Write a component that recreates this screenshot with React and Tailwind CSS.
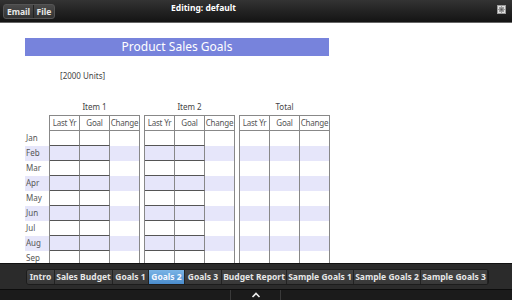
import React from 'react';

const MONTHS = ['Jan', 'Feb', 'Mar', 'Apr', 'May', 'Jun', 'Jul', 'Aug', 'Sep'];

const TABS = [
  { label: 'Intro', w: 'w-[28px]' },
  { label: 'Sales Budget', w: 'w-[58px]' },
  { label: 'Goals 1', w: 'w-[36px]' },
  { label: 'Goals 2', w: 'w-[36px]', active: true },
  { label: 'Goals 3', w: 'w-[37px]' },
  { label: 'Budget Report', w: 'w-[65px]' },
  { label: 'Sample Goals 1', w: 'w-[67px]' },
  { label: 'Sample Goals 2', w: 'w-[67px]' },
  { label: 'Sample Goals 3', w: 'w-[67px]' },
];

function GoalTable({ title, lined }) {
  return (
    <div className="flex flex-col w-[91px]">
      <div className="h-[14px] text-[8px] leading-[12px] text-center text-[#444]">{title}</div>
      <div className="border-l border-t border-[#888]">
        {/* header */}
        <div className="flex h-[15px] border-b border-[#888]">
          {['Last Yr', 'Goal', 'Change'].map((h) => (
            <div key={h} className="w-[30px] border-r border-[#888] text-[8px] leading-[14px] text-center text-[#555] tracking-[-0.2px]">
              {h}
            </div>
          ))}
        </div>
        {MONTHS.map((m, i) => {
          const shade = i % 2 === 1 ? 'bg-[#e6e6fa]' : 'bg-white';
          return (
            <div key={m} className="flex">
              {[0, 1, 2].map((c) => (
                <div
                  key={c}
                  className={`w-[30px] h-[15px] border-r border-[#888] ${shade} ${
                    lined && c < 2 ? 'border-b border-b-[#555]' : ''
                  }`}
                />
              ))}
            </div>
          );
        })}
      </div>
    </div>
  );
}

export default function App() {
  return (
    <div className="w-[512px] h-[300px] flex flex-col overflow-hidden font-['Noto_Sans',sans-serif]">
      {/* top bar */}
      <div className="h-[23px] shrink-0 flex items-center bg-gradient-to-b from-[#333] to-[#141414] border-b border-[#666] relative">
        <div className="ml-[3px] flex h-[15px] rounded-[3px] border border-[#555] bg-gradient-to-b from-[#4a4a4a] to-[#333] text-[8.5px] font-bold text-[#e8e8e8] leading-[13px]">
          <div className="w-[30px] text-center border-r border-[#222]">Email</div>
          <div className="w-[20px] text-center">File</div>
        </div>
        <div className="ml-[116px] text-[8.5px] font-bold text-white leading-none pb-[5px]">Editing: default</div>
        <svg className="absolute right-[6px] top-[5px]" width="9" height="9" viewBox="0 0 9 9">
          <rect x="0" y="0" width="9" height="9" fill="#9a9a9a" />
          <path d="M1 1h3v1H2v2H1zM8 1v3H7V2H5V1zM1 8V5h1v2h2v1zM8 8H5V7h2V5h1z" fill="#e0e0e0" />
          <rect x="3.5" y="3.5" width="2" height="2" fill="#555" />
        </svg>
      </div>

      {/* sheet */}
      <div className="flex-1 overflow-hidden bg-white pl-[25px] pt-[15px]">
        <div className="w-[304px] h-[18px] bg-[#7783dc] text-white text-[12px] flex items-center justify-center leading-none">
          Product Sales Goals
        </div>
        <div className="mt-[14px] h-[12px] pl-[35px] text-[8px] leading-[12px] text-[#444]">[2000 Units]</div>
        <div className="mt-[19px] flex">
          <div className="w-[24px] flex flex-col">
            <div className="h-[30px]" />
            {MONTHS.map((m, i) => (
              <div
                key={m}
                className={`h-[15px] text-[8px] leading-[14px] pl-[1px] text-[#555] ${i % 2 === 1 ? 'bg-[#e6e6fa]' : ''}`}
              >
                {m}
              </div>
            ))}
          </div>
          <GoalTable title="Item 1" lined />
          <div className="w-[4px]" />
          <GoalTable title="Item 2" lined />
          <div className="w-[4px]" />
          <GoalTable title="Total" />
        </div>
      </div>

      {/* sheet tabs */}
      <div className="h-[26px] shrink-0 bg-[#2b2b2b] border-t border-[#111] flex items-center pl-[26px]">
        <div className="flex h-[16px] rounded-[3px] overflow-hidden border border-[#1c1c1c]">
          {TABS.map((t) => (
            <div
              key={t.label}
              className={`${t.w} text-center text-[8.5px] font-bold leading-[14px] border-r border-[#222] whitespace-nowrap ${
                t.active
                  ? 'bg-gradient-to-b from-[#7ab4e6] to-[#4a8ccc] text-[#f4f8ff]'
                  : 'bg-gradient-to-b from-[#444] to-[#383838] text-[#e6e6e6]'
              }`}
            >
              {t.label}
            </div>
          ))}
        </div>
      </div>

      {/* bottom strip */}
      <div className="h-[11px] shrink-0 bg-[#1b1b1b] border-t border-[#0c0c0c] flex">
        <div className="w-[231px] border-r border-[#3a3a3a]" />
        <div className="w-[50px] border-r border-[#3a3a3a] flex justify-center pt-[2px]">
          <svg width="10" height="6" viewBox="0 0 10 6">
            <polyline points="1.5,5 5,1.5 8.5,5" fill="none" stroke="#eee" strokeWidth="1.6" />
          </svg>
        </div>
      </div>
    </div>
  );
}
